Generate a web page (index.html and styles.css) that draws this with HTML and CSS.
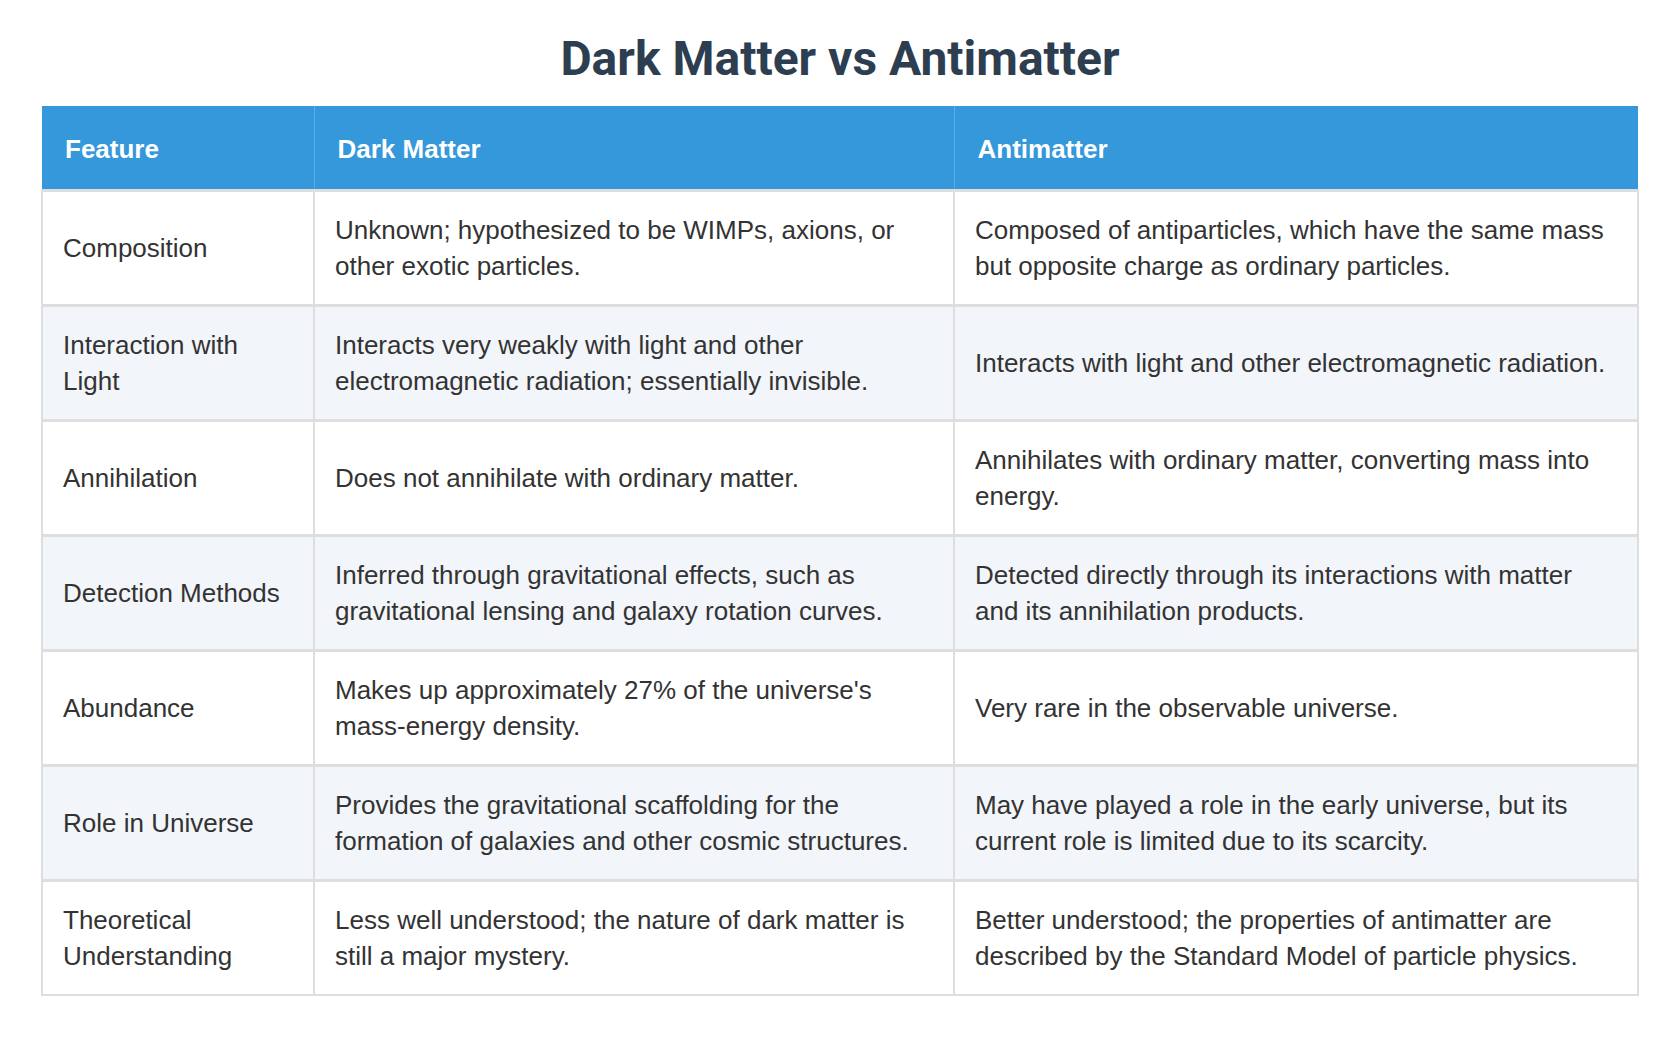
FILE: index.html
```html
<!DOCTYPE html>
<html lang="en">
<head>
<meta charset="utf-8">
<title>Dark Matter vs Antimatter</title>
<link rel="stylesheet" href="styles.css">
</head>
<body>
<main class="page">
  <h1 class="title">Dark Matter vs Antimatter</h1>
  <table class="compare">
    <colgroup>
      <col class="col-feature">
      <col class="col-dark">
      <col class="col-anti">
    </colgroup>
    <thead>
      <tr>
        <th>Feature</th>
        <th>Dark Matter</th>
        <th>Antimatter</th>
      </tr>
    </thead>
    <tbody>
      <tr>
        <td>Composition</td>
        <td>Unknown; hypothesized to be WIMPs, axions, or other exotic particles.</td>
        <td>Composed of antiparticles, which have the same mass but opposite charge as ordinary particles.</td>
      </tr>
      <tr>
        <td>Interaction with Light</td>
        <td>Interacts very weakly with light and other electromagnetic radiation; essentially invisible.</td>
        <td>Interacts with light and other electromagnetic radiation.</td>
      </tr>
      <tr>
        <td>Annihilation</td>
        <td>Does not annihilate with ordinary matter.</td>
        <td>Annihilates with ordinary matter, converting mass into energy.</td>
      </tr>
      <tr>
        <td>Detection Methods</td>
        <td>Inferred through gravitational effects, such as gravitational lensing and galaxy rotation curves.</td>
        <td>Detected directly through its interactions with matter and its annihilation products.</td>
      </tr>
      <tr>
        <td>Abundance</td>
        <td>Makes up approximately 27% of the universe's mass-energy density.</td>
        <td>Very rare in the observable universe.</td>
      </tr>
      <tr>
        <td>Role in Universe</td>
        <td>Provides the gravitational scaffolding for the formation of galaxies and other cosmic structures.</td>
        <td>May have played a role in the early universe, but its current role is limited due to its scarcity.</td>
      </tr>
      <tr>
        <td>Theoretical Understanding</td>
        <td>Less well understood; the nature of dark matter is still a major mystery.</td>
        <td>Better understood; the properties of antimatter are described by the Standard Model of particle physics.</td>
      </tr>
    </tbody>
  </table>
</main>
</body>
</html>
```

FILE: styles.css
```css
html, body {
  margin: 0;
  padding: 0;
  background: #ffffff;
}

.page {
  padding: 31px 41px 40px;
  font-family: "Liberation Sans", Arial, sans-serif;
  color: #333333;
}

.title {
  margin: 0 0 19px;
  font-family: Roboto, "Liberation Sans", sans-serif;
  font-weight: 700;
  font-size: 48px;
  line-height: 56px;
  text-align: center;
  color: #2c3e50;
}

.compare {
  width: 100%;
  table-layout: fixed;
  border-collapse: collapse;
  font-size: 26px;
  line-height: 36px;
}

.col-feature { width: 272px; }
.col-dark { width: 640px; }
.col-anti { width: auto; }

.compare th {
  background: #3498db;
  color: #ffffff;
  font-weight: 700;
  text-align: left;
  padding: 25px 23px 22px 23px;
  border-left: 1px solid #5aaee6;
  border-bottom: 2px solid #dddddd;
}

.compare th:first-child {
  border-left: none;
}

.compare td {
  padding: 20px 19px 20px 20px;
  border: 2px solid #dedede;
  border-top-width: 3px;
  vertical-align: middle;
}

.compare tbody tr:nth-child(even) td {
  background: #f2f5f9;
}
```
